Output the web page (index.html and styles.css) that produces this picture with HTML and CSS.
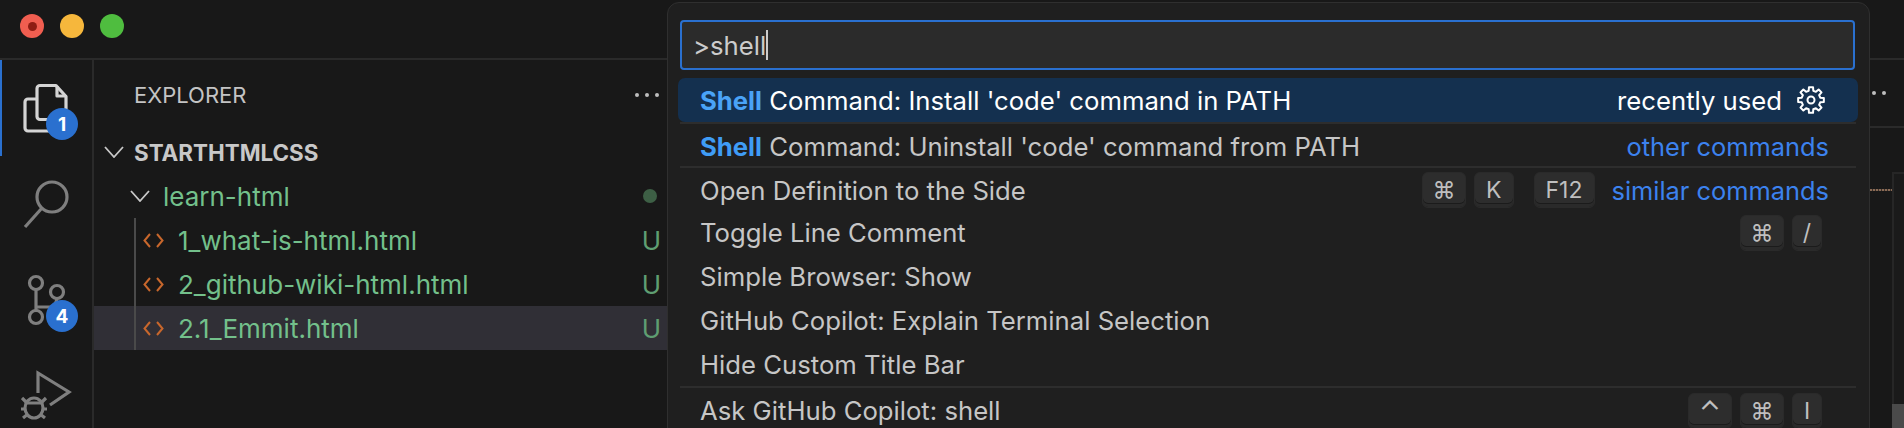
FILE: index.html

```html
<!DOCTYPE html>
<html lang="en">
<head>
  <meta charset="UTF-8">
  <title>Command Palette</title>
  <link rel="stylesheet" href="styles.css">
</head>
<body>
  <div class="window">
    <div class="titlebar">
      <span class="light red"><i></i></span>
      <span class="light yellow"></span>
      <span class="light green"></span>
    </div>

    <div class="workbench">
      <nav class="activity">
        <div class="act active">
          <svg width="62" height="62" viewBox="0 0 62 62" fill="none" stroke="#d4d4d4" stroke-width="3.2" stroke-linejoin="round">
            <path d="M19 3.500h16l10 11v21a2 2 0 0 1-2 2H19a3 3 0 0 1-3-3V6.500a3 3 0 0 1 3-3z"/>
            <path d="M36 4v10h9"/>
            <path d="M16 17H7a3 3 0 0 0-3 3v26a3 3 0 0 0 3 3h24"/>
          </svg>
          <span class="badge">1</span>
        </div>
        <div class="act">
          <svg width="62" height="62" viewBox="0 0 62 62" fill="none" stroke="#7f7f7f" stroke-width="3.200">
            <circle cx="31" cy="19" r="15"/>
            <path d="M21 30L4 49"/>
          </svg>
        </div>
        <div class="act">
          <svg width="62" height="62" viewBox="0 0 62 62" fill="none" stroke="#7f7f7f" stroke-width="3.200">
            <circle cx="15" cy="9" r="6.500"/>
            <circle cx="15" cy="43" r="6.500"/>
            <circle cx="36" cy="18" r="6.500"/>
            <path d="M15 15.500v21M15 33h14c4 0 6-3 7-8.500"/>
          </svg>
          <span class="badge">4</span>
        </div>
        <div class="act">
          <svg width="62" height="62" viewBox="0 0 62 62" fill="none" stroke="#7f7f7f" stroke-width="3.200">
            <path d="M17 23V3l31 19-19 13"/>
            <ellipse cx="13" cy="38" rx="9" ry="10"/>
            <path d="M5 33h16M1 28l5 5M25 28l-5 5M0 39h5M26 39h-5M2 48l5-4M24 48l-5-4"/>
          </svg>
        </div>
      </nav>

      <aside class="sidebar">
        <div class="side-head">
          <span>EXPLORER</span>
          <span class="dots"><i></i><i></i><i></i></span>
        </div>
        <div class="tree-row root">
          <svg class="chev" width="20" height="12" viewBox="0 0 20 12"><path d="M1 1l9 10 9-10"/></svg>
          <span>STARTHTMLCSS</span>
        </div>
        <div class="tree-row folder">
          <svg class="chev" width="20" height="12" viewBox="0 0 20 12"><path d="M1 1l9 10 9-10"/></svg>
          <span class="name">learn-html</span>
          <i class="git-dot"></i>
        </div>
        <div class="files">
          <div class="tree-row file">
            <svg class="html-icon" width="21" height="17" viewBox="0 0 21 17"><path d="M7 2L1.500 8.500 7 15M14 2l5.500 6.500L14 15"/></svg>
            <span class="name">1_what-is-html.html</span>
            <span class="git-u">U</span>
          </div>
          <div class="tree-row file">
            <svg class="html-icon" width="21" height="17" viewBox="0 0 21 17"><path d="M7 2L1.500 8.500 7 15M14 2l5.500 6.500L14 15"/></svg>
            <span class="name">2_github-wiki-html.html</span>
            <span class="git-u">U</span>
          </div>
          <div class="tree-row file hovered">
            <svg class="html-icon" width="21" height="17" viewBox="0 0 21 17"><path d="M7 2L1.500 8.500 7 15M14 2l5.500 6.500L14 15"/></svg>
            <span class="name">2.1_Emmit.html</span>
            <span class="git-u">U</span>
          </div>
        </div>
      </aside>

      <main class="editor">
        <div class="editor-head"><span class="dots"><i></i><i></i><i></i></span></div>
        <div class="editor-body">
          <div class="minimap"><div class="mini-text"></div><div class="mini-thumb"></div></div>
        </div>
      </main>
    </div>

    <div class="palette">
      <div class="input"><span>&gt;shell</span><i class="caret"></i></div>

      <div class="pick selected">
        <span class="label"><b>Shell</b> Command: Install 'code' command in PATH</span>
        <span class="tag">recently used</span>
        <svg class="gear" width="28" height="28" viewBox="0 0 28 28" fill="none" stroke="#fff" stroke-width="2" stroke-linejoin="round">
          <path d="M11.700 4.780L11.970 1.160H16.030L16.300 4.780L18.890 5.860L21.640 3.480L24.520 6.360L22.140 9.110L23.220 11.700L26.840 11.970V16.030L23.220 16.300L22.140 18.890L24.520 21.640L21.640 24.520L18.890 22.140L16.300 23.220L16.030 26.840H11.970L11.700 23.220L9.110 22.140L6.360 24.520L3.480 21.640L5.860 18.890L4.780 16.300L1.160 16.030V11.970L4.780 11.700L5.860 9.110L3.480 6.360L6.360 3.480L9.110 5.860Z"/>
          <circle cx="14" cy="14" r="3.500"/>
        </svg>
      </div>
      <div class="pick second sep-below">
        <span class="label"><b>Shell</b> Command: Uninstall 'code' command from PATH</span>
        <span class="tag link">other commands</span>
      </div>
      <div class="pick third">
        <span class="label">Open Definition to the Side</span>
        <span class="keys"><kbd class="cmd">⌘</kbd><kbd>K</kbd></span>
        <span class="keys"><kbd>F12</kbd></span>
        <span class="tag link">similar commands</span>
      </div>
      <div class="pick">
        <span class="label">Toggle Line Comment</span>
        <span class="keys end"><kbd class="cmd">⌘</kbd><kbd class="narrow">/</kbd></span>
      </div>
      <div class="pick"><span class="label">Simple Browser: Show</span></div>
      <div class="pick"><span class="label">GitHub Copilot: Explain Terminal Selection</span></div>
      <div class="pick seventh sep-below"><span class="label">Hide Custom Title Bar</span></div>
      <div class="pick">
        <span class="label">Ask GitHub Copilot: shell</span>
        <span class="keys end"><kbd class="ctrl">⌃</kbd><kbd class="cmd">⌘</kbd><kbd class="narrow">I</kbd></span>
      </div>
    </div>
  </div>
</body>
</html>
```

FILE: styles.css

```css
* {
  box-sizing: border-box;
}
html, body {
  margin: 0;
  height: 100%;
  overflow: hidden;
  background: #181818;
}
body {
  font-family: "Inter", "Liberation Sans", sans-serif;
  font-size: 25.7px;
  color: #ccc;
}
.window {
  position: relative;
  width: 1904px;
  height: 428px;
  overflow: hidden;
  display: flex;
  flex-direction: column;
}

/* title bar */
.titlebar {
  height: 60px;
  flex: none;
  display: flex;
  align-items: flex-start;
  gap: 16px;
  padding: 14px 0 0 20px;
  border-bottom: 2px solid #2a2a2a;
}
.light {
  width: 24px;
  height: 24px;
  border-radius: 50%;
  display: flex;
  align-items: center;
  justify-content: center;
}
.light i {
  width: 9px;
  height: 9px;
  border-radius: 50%;
  background: #8e1d13;
}
.red { background: #f05e50; }
.yellow { background: #f6b73c; }
.green { background: #4fbd3f; }

.workbench {
  flex: 1;
  display: flex;
  min-height: 0;
}

/* activity bar */
.activity {
  width: 94px;
  flex: none;
  border-right: 2px solid #2a2a2a;
}
.act {
  position: relative;
  height: 96px;
  padding: 22px 0 0 19px;
  border-left: 2px solid transparent;
}
.act.active {
  border-left-color: #2a70cf;
}
.badge {
  position: absolute;
  left: 44px;
  top: 48px;
  width: 32px;
  height: 32px;
  border-radius: 50%;
  background: #2a70cf;
  color: #fff;
  font-size: 19px;
  font-weight: 700;
  display: flex;
  align-items: center;
  justify-content: center;
}

/* sidebar */
.sidebar {
  width: 574px;
  flex: none;
  font-size: 26px;
}
.side-head {
  height: 70px;
  display: flex;
  align-items: center;
  justify-content: space-between;
  padding: 0 9px 0 40px;
  font-size: 22px;
  color: #c4c4c4;
}
.dots {
  display: flex;
  gap: 6px;
}
.dots i {
  width: 4px;
  height: 4px;
  border-radius: 50%;
  background: #bdbdbd;
}
.tree-row {
  height: 44px;
  display: flex;
  align-items: center;
}
.chev {
  flex: none;
  fill: none;
  stroke: #c8c8c8;
  stroke-width: 1.8;
}
.root {
  padding-left: 10px;
  gap: 10px;
  font-size: 22.4px;
  font-weight: 700;
  color: #c8c8c8;
}
.folder {
  padding: 0 11px 0 36px;
  gap: 13px;
}
.name {
  color: #73c08b;
  flex: 1;
}
.git-dot {
  width: 14px;
  height: 14px;
  border-radius: 50%;
  background: #3d5f45;
}
.files {
  position: relative;
}
.files::before {
  content: "";
  position: absolute;
  left: 40px;
  top: 0;
  bottom: 0;
  width: 2px;
  background: #4a4a4a;
  z-index: 1;
}
.file {
  padding: 0 7px 0 49px;
  gap: 14px;
}
.hovered {
  background: #302f36;
}
.html-icon {
  flex: none;
  fill: none;
  stroke: #c8672c;
  stroke-width: 2;
}
.git-u {
  color: #5f9e72;
}

/* editor behind the palette */
.editor {
  flex: 1;
  min-width: 0;
}
.editor-head {
  height: 68px;
  display: flex;
  align-items: center;
  justify-content: flex-end;
  padding-right: 18px;
  border-bottom: 2px solid #2a2a2a;
}
.editor-body {
  display: flex;
  justify-content: flex-end;
  padding-top: 44px;
  height: 100%;
}
.minimap {
  position: relative;
  width: 12px;
  border-left: 2px solid #262626;
  border-top: 2px solid #262626;
  background: #1a1a1a;
}
.mini-text {
  position: absolute;
  left: -24px;
  top: 15px;
  width: 22px;
  height: 2px;
  background: repeating-linear-gradient(90deg, #8a6a55 0 2px, #3a322c 2px 3px);
}
.mini-thumb {
  position: absolute;
  left: -2px;
  right: 0;
  top: 230px;
  height: 30px;
  background: #4a4a4a;
}

/* command palette */
.palette {
  position: absolute;
  left: 667px;
  top: 2px;
  width: 1203px;
  height: 440px;
  padding: 17px 14px 0 10px;
  background: #1f1f1f;
  border: 1px solid #2f2f2f;
  border-radius: 12px;
}
.input {
  height: 50px;
  margin: 0 0 8px 2px;
  padding: 0 11px;
  display: flex;
  align-items: center;
  background: #2b2b2b;
  border: 2px solid #2a70cf;
  border-radius: 4px;
  color: #ccc;
}
.caret {
  width: 1.5px;
  height: 30px;
  background: #ccc;
}
.pick {
  height: 44px;
  display: flex;
  align-items: center;
  justify-content: flex-end;
  padding: 0 27px 0 20px;
  margin: 0 -1px 0 2px;
  color: #c6c6c6;
}
.label {
  flex: 1;
}
.label b {
  color: #3f9cf5;
  font-weight: 700;
}
.selected {
  margin: 0 -3px 0 0;
  padding: 0 33px 0 22px;
  background: #14304f;
  border-radius: 7px;
  color: #fff;
}
.selected .label b {
  color: #4aa3f7;
}
.gear {
  margin-left: 15px;
}
.tag.link {
  color: #3c82ee;
  margin-left: 17px;
  font-size: 25.4px;
}
.second {
  height: 46px;
  padding-top: 2px;
  border-top: 2px solid #2d2d2d;
}
.third {
  height: 42px;
  padding-top: 2px;
}
.seventh {
  height: 46px;
}
.sep-below {
  border-bottom: 2px solid #2d2d2d;
}
.keys {
  display: flex;
  gap: 8px;
  margin-left: 20px;
}
.keys.end {
  margin: 2px 7px 0 0;
}
kbd {
  min-width: 38px;
  height: 36px;
  padding: 0 11px;
  display: flex;
  align-items: center;
  justify-content: center;
  font-family: "Inter", "DejaVu Sans", sans-serif;
  font-size: 23px;
  color: #bfbfbf;
  background: #2d2d2d;
  border: 1px solid #2a2a2a;
  border-radius: 6px;
  box-shadow: inset 0 -3px 0 #2a2a2a, inset 0 -4px 0 #1b1b1b;
}
kbd.cmd {
  width: 44px;
  padding: 0;
}
kbd.narrow {
  min-width: 30px;
  padding: 0;
}
kbd.ctrl {
  width: 44px;
  padding: 0;
  font-size: 28px;
  line-height: 1;
}
```
